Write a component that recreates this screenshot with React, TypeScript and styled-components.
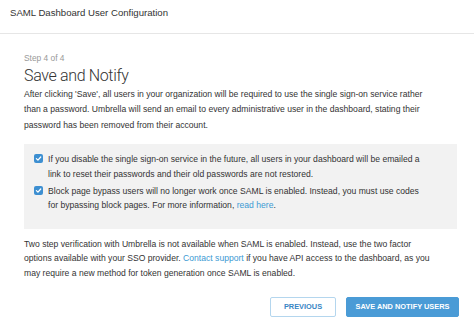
import React from 'react'
import styled, { createGlobalStyle } from 'styled-components'

const GlobalStyle = createGlobalStyle`
  html, body {
    margin: 0;
    padding: 0;
    background: #fff;
  }
  body {
    font-family: "Liberation Sans", Arial, sans-serif;
    color: #333;
  }
`

const Page = styled.div`
  width: 474px;
  height: 333px;
  overflow: hidden;
  background: #fff;
`

const Header = styled.header`
  height: 34px;
  box-sizing: border-box;
  padding: 7px 10px 0;
  border-bottom: 1px solid #e6e6e6;
  font-size: 9.6px;
  line-height: 12px;
  color: #333;
`

const Body = styled.main`
  padding: 19px 15px 0 24px;
`

const Step = styled.div`
  font-size: 8.4px;
  line-height: 10px;
  color: #999;
`

const Title = styled.h2`
  margin: 3px 0 0;
  font-family: Roboto, "Liberation Sans", sans-serif;
  font-size: 16px;
  line-height: 20px;
  font-weight: 300;
  letter-spacing: -0.35px;
  color: #333;
`

const Text = styled.p<{ $top?: number; $lh?: number }>`
  margin: ${(p) => p.$top ?? 0}px 0 0;
  font-size: 8.6px;
  line-height: ${(p) => p.$lh ?? 15.4}px;
  color: #333;
  white-space: nowrap;
`

const Notice = styled.div`
  margin-top: 11px;
  margin-right: 2px;
  background: #f2f2f2;
  padding: 8px 12px 16px 10px;
  display: flex;
  flex-direction: column;
  gap: 3px;
`

const Item = styled.label`
  display: flex;
  align-items: flex-start;
  gap: 5px;
  font-size: 8.6px;
  line-height: 14.4px;
  white-space: nowrap;
`

const Box = styled.span`
  flex: none;
  width: 9px;
  height: 9px;
  margin-top: 2px;
  border-radius: 2px;
  background: #3d8fd1;
  display: flex;
  align-items: center;
  justify-content: center;
`

const Link = styled.a`
  color: #3c9ad3;
  text-decoration: none;
`

const Actions = styled.div`
  display: flex;
  justify-content: flex-end;
  gap: 10px;
  margin-top: 16px;
`

const Button = styled.button<{ $primary?: boolean }>`
  height: 20px;
  box-sizing: border-box;
  padding: 0 ${(p) => (p.$primary ? 8.5 : 13)}px;
  font-family: "Liberation Sans", Arial, sans-serif;
  font-size: 7.4px;
  font-weight: 700;
  border-radius: 2px;
  cursor: pointer;
  background: ${(p) => (p.$primary ? '#4a9bd6' : '#fff')};
  color: ${(p) => (p.$primary ? '#fff' : '#3a86c4')};
  border: 1px solid ${(p) => (p.$primary ? '#4a9bd6' : '#b4d6ee')};
`

const Check = () => (
  <Box>
    <svg width="7" height="7" viewBox="0 0 10 10">
      <path d="M2 5.2 L4.2 7.3 L8.2 2.8" fill="none" stroke="#fff" strokeWidth="1.8" strokeLinecap="round" strokeLinejoin="round" />
    </svg>
  </Box>
)

export default function App() {
  return (
    <Page>
      <GlobalStyle />
      <Header>SAML Dashboard User Configuration</Header>
      <Body>
        <Step>Step 4 of 4</Step>
        <Title>Save and Notify</Title>
        <Text $top={1}>
          After clicking 'Save', all users in your organization will be required to use the single sign-on service rather
          <br />
          than a password. Umbrella will send an email to every administrative user in the dashboard, stating their
          <br />
          password has been removed from their account.
        </Text>
        <Notice>
          <Item>
            <Check />
            <span>
              If you disable the single sign-on service in the future, all users in your dashboard will be emailed a
              <br />
              link to reset their passwords and their old passwords are not restored.
            </span>
          </Item>
          <Item>
            <Check />
            <span>
              Block page bypass users will no longer work once SAML is enabled. Instead, you must use codes
              <br />
              for bypassing block pages. For more information, <Link href="#">read here</Link>.
            </span>
          </Item>
        </Notice>
        <Text $top={8} $lh={14.6}>
          Two step verification with Umbrella is not available when SAML is enabled. Instead, use the two factor
          <br />
          options available with your SSO provider. <Link href="#">Contact support</Link> if you have API access to the dashboard, as you
          <br />
          may require a new method for token generation once SAML is enabled.
        </Text>
        <Actions>
          <Button>PREVIOUS</Button>
          <Button $primary>SAVE AND NOTIFY USERS</Button>
        </Actions>
      </Body>
    </Page>
  )
}
